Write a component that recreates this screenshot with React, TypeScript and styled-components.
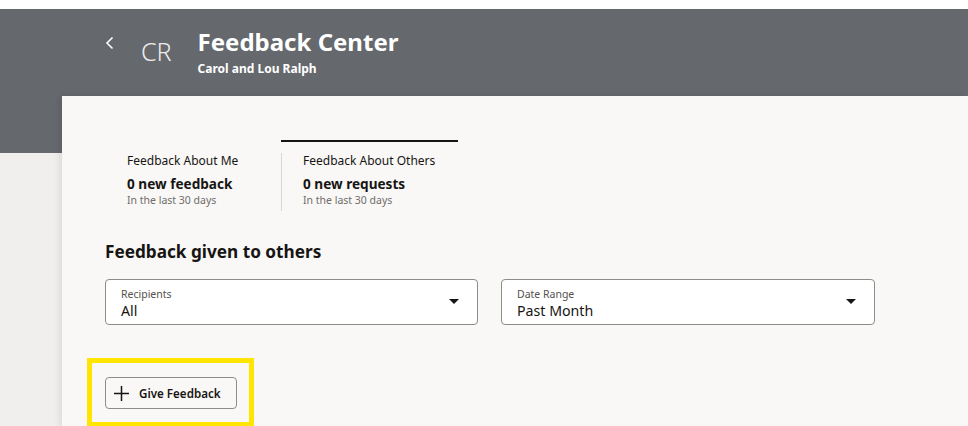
import React from 'react';
import styled, { createGlobalStyle } from 'styled-components';

const GlobalStyle = createGlobalStyle`
    html, body {
        margin: 0;
        padding: 0;
        background: #ffffff;
    }

    body {
        font-family: "Noto Sans", "Open Sans", sans-serif;
        color: #161513;
    }
`;

const Page = styled.div`
    padding-top: 9px;
    min-height: 417px;
    background: #ffffff;
`;

const Shell = styled.div`
    min-height: 417px;
    background: linear-gradient(#65686c 0, #65686c 144px, #f0efed 144px);
    display: flex;
    flex-direction: column;
`;

const Header = styled.header`
    height: 87px;
    display: flex;
    align-items: flex-start;
    padding-left: 104px;
    box-sizing: border-box;
`;

const BackButton = styled.button`
    border: none;
    background: none;
    padding: 0;
    margin-top: 27px;
    width: 10px;
    height: 14px;
    cursor: pointer;
    display: flex;
`;

const Avatar = styled.div`
    margin-left: 27px;
    margin-top: 27px;
    font-size: 25px;
    font-weight: 300;
    line-height: 30px;
    color: #ececec;
`;

const TitleBlock = styled.div`
    margin-left: 26px;
    margin-top: 16px;
    color: #ffffff;

    h1 {
        margin: 0;
        font-size: 24px;
        font-weight: 700;
        line-height: 34px;
    }

    p {
        margin: 2px 0 0 0;
        font-size: 12px;
        font-weight: 700;
        line-height: 16px;
    }
`;

const Body = styled.div`
    flex: 1;
    display: flex;
`;

const Gutter = styled.div`
    width: 62px;
    flex-shrink: 0;
`;

const Card = styled.main`
    flex: 1;
    background: #f9f8f6;
    box-shadow: -3px 0 6px rgba(0, 0, 0, 0.08);
    padding: 44px 93px 0 43px;
    min-height: 330px;
    box-sizing: border-box;
`;

const Tabs = styled.div`
    display: flex;
`;

const Tab = styled.div<{ $active?: boolean; $first?: boolean }>`
    width: ${(p) => (p.$first ? '176px' : '177px')};
    border-top: 2px solid ${(p) => (p.$active ? '#161513' : 'transparent')};
`;

const TabBody = styled.div<{ $divider?: boolean }>`
    margin-top: 11px;
    padding-left: ${(p) => (p.$divider ? '21px' : '22px')};
    border-left: ${(p) => (p.$divider ? '1px solid #d9d7d3' : 'none')};
    height: 58px;
    box-sizing: border-box;
`;

const TabTitle = styled.div`
    font-size: 12px;
    line-height: 16px;
    color: #161513;
`;

const TabCount = styled.div`
    margin-top: 6px;
    font-size: 13.6px;
    font-weight: 700;
    line-height: 18px;
`;

const TabNote = styled.div`
    font-size: 10.5px;
    line-height: 14px;
    color: #6f6c68;
`;

const SectionTitle = styled.h2`
    margin: 29px 0 0 0;
    font-size: 17.2px;
    font-weight: 700;
    line-height: 24px;
`;

const Filters = styled.div`
    margin-top: 15px;
    display: grid;
    grid-template-columns: 373px 374px;
    gap: 23px;
`;

const Select = styled.div`
    height: 46px;
    box-sizing: border-box;
    background: #ffffff;
    border: 1px solid #8e8c89;
    border-radius: 4px;
    padding: 7px 18px 0 15px;
    display: flex;
    align-items: center;
    justify-content: space-between;
`;

const SelectText = styled.div`
    align-self: flex-start;

    label {
        display: block;
        font-size: 10.5px;
        line-height: 14px;
        color: #55524e;
    }

    span {
        display: block;
        font-size: 14.2px;
        line-height: 19px;
    }
`;

const Caret = styled.div`
    width: 0;
    height: 0;
    margin-top: -9px;
    border-left: 5px solid transparent;
    border-right: 5px solid transparent;
    border-top: 5px solid #161513;
`;

const Highlight = styled.div`
    display: inline-block;
    margin: 33px 0 0 -18px;
    padding: 14px 12px 13px 13px;
    border: 5px solid #ffe500;
`;

const Button = styled.button`
    height: 32px;
    box-sizing: border-box;
    padding: 0 15px 0 7px;
    display: flex;
    align-items: center;
    gap: 9px;
    background: transparent;
    border: 1px solid #8e8c89;
    border-radius: 4px;
    font-family: inherit;
    font-size: 11.6px;
    font-weight: 600;
    color: #161513;
    cursor: pointer;
`;

const App = () => {
    return (
        <>
            <GlobalStyle />
            <Page>
                <Shell>
                    <Header>
                        <BackButton aria-label="Back">
                            <svg width="10" height="14" viewBox="0 0 10 14">
                                <path d="M8.5 1.5 L3 7 L8.5 12.5" fill="none" stroke="#ffffff" strokeWidth="1.6" />
                            </svg>
                        </BackButton>
                        <Avatar>CR</Avatar>
                        <TitleBlock>
                            <h1>Feedback Center</h1>
                            <p>Carol and Lou Ralph</p>
                        </TitleBlock>
                    </Header>
                    <Body>
                        <Gutter />
                        <Card>
                            <Tabs>
                                <Tab $first>
                                    <TabBody>
                                        <TabTitle>Feedback About Me</TabTitle>
                                        <TabCount>0 new feedback</TabCount>
                                        <TabNote>In the last 30 days</TabNote>
                                    </TabBody>
                                </Tab>
                                <Tab $active>
                                    <TabBody $divider>
                                        <TabTitle>Feedback About Others</TabTitle>
                                        <TabCount>0 new requests</TabCount>
                                        <TabNote>In the last 30 days</TabNote>
                                    </TabBody>
                                </Tab>
                            </Tabs>
                            <SectionTitle>Feedback given to others</SectionTitle>
                            <Filters>
                                <Select>
                                    <SelectText>
                                        <label>Recipients</label>
                                        <span>All</span>
                                    </SelectText>
                                    <Caret />
                                </Select>
                                <Select>
                                    <SelectText>
                                        <label>Date Range</label>
                                        <span>Past Month</span>
                                    </SelectText>
                                    <Caret />
                                </Select>
                            </Filters>
                            <Highlight>
                                <Button>
                                    <svg width="17" height="17" viewBox="0 0 17 17">
                                        <path d="M8.5 1 V16 M1 8.5 H16" stroke="#161513" strokeWidth="1.5" />
                                    </svg>
                                    Give Feedback
                                </Button>
                            </Highlight>
                        </Card>
                    </Body>
                </Shell>
            </Page>
        </>
    );
};

export default App;
